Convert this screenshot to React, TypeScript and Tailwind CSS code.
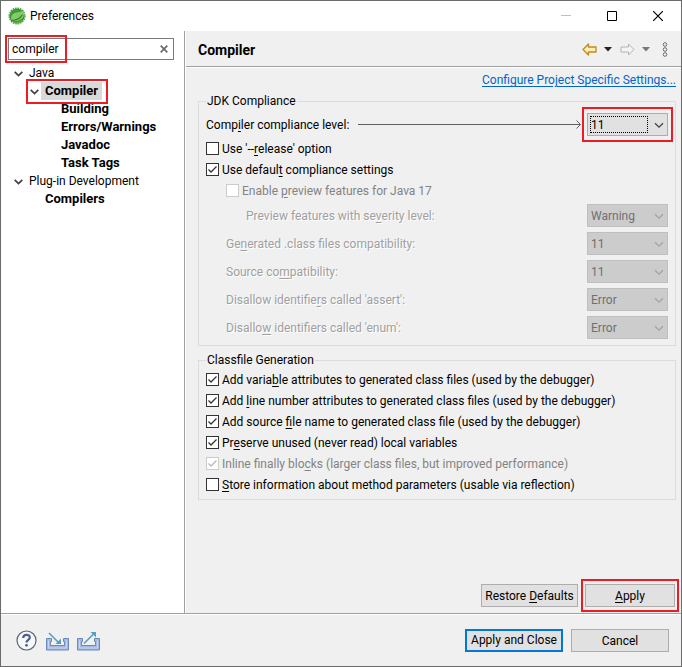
import type { ReactNode } from "react";

function Key({ children }: { children: ReactNode }) {
  return <span className="underline underline-offset-2">{children}</span>;
}

function Chevron({ className }: { className?: string }) {
  return (
    <svg className={className} width="10" height="7" viewBox="0 0 10 7" fill="none">
      <path d="M1 1.2 5 5.2 9 1.2" stroke="currentColor" strokeWidth="1.3" />
    </svg>
  );
}

function TreeArrow() {
  return (
    <svg className="mt-0.5 shrink-0" width="9" height="6" viewBox="0 0 9 6" fill="none">
      <path d="M.7.8 4.5 4.6 8.3.8" stroke="#404040" strokeWidth="1.7" />
    </svg>
  );
}

function Checkbox({
  id,
  checked = false,
  disabled = false,
  children,
}: {
  id: string;
  checked?: boolean;
  disabled?: boolean;
  children: ReactNode;
}) {
  return (
    <div className="flex h-[21px] items-center gap-[3px]">
      <span className="relative h-[13px] w-[13px] shrink-0">
        <input
          id={id}
          type="checkbox"
          defaultChecked={checked}
          disabled={disabled}
          className="peer block h-[13px] w-[13px] appearance-none border border-[#333333] bg-white disabled:border-[#cccccc]"
        />
        <svg
          className="pointer-events-none absolute inset-0 hidden text-[#333333] peer-checked:block peer-disabled:text-[#b8b8b8]"
          width="13"
          height="13"
          viewBox="0 0 13 13"
          fill="none"
        >
          <path d="M2.5 6.5 5 9 10.5 3.5" stroke="currentColor" strokeWidth="1.3" />
        </svg>
      </span>
      <label htmlFor={id} className={disabled ? "text-[#838383]" : "text-black"}>
        {children}
      </label>
    </div>
  );
}

function Combo({ id, value, disabled = false }: { id: string; value: string; disabled?: boolean }) {
  return (
    <span className="relative block h-[23px] w-[81px] shrink-0">
      <select
        id={id}
        defaultValue={value}
        disabled={disabled}
        className="block h-full w-full appearance-none border border-[#adadad] bg-[#e1e1e1] px-[3px] text-black outline-none disabled:border-[#bfbfbf] disabled:bg-[#cccccc] disabled:text-[#707070] disabled:opacity-100"
      >
        <option>{value}</option>
      </select>
      <Chevron
        className={
          disabled
            ? "pointer-events-none absolute top-[9px] right-1 text-[#a3a3a3]"
            : "pointer-events-none absolute top-[9px] right-1 text-[#404040]"
        }
      />
      {!disabled && (
        <span className="pointer-events-none absolute inset-y-[3px] right-[20px] left-[3px] border border-dotted border-black" />
      )}
    </span>
  );
}

function DisabledRow({
  id,
  value,
  nested = false,
  children,
}: {
  id: string;
  value: string;
  nested?: boolean;
  children: ReactNode;
}) {
  return (
    <div className={nested ? "flex items-center justify-between pl-10" : "flex items-center justify-between pl-5"}>
      <label htmlFor={id} className="text-[#a0a0a0] [text-shadow:1px_1px_0_#fff]">
        {children}
      </label>
      <Combo id={id} value={value} disabled />
    </div>
  );
}

function Highlight({ className }: { className: string }) {
  return <span className={`pointer-events-none absolute border-2 border-[#ed1c24] ${className}`} />;
}

function SpringLogo() {
  return (
    <svg width="18" height="18" viewBox="0 0 18 18">
      <circle cx="9" cy="9" r="7.6" fill="#3f9a35" />
      <circle cx="9" cy="9" r="7.9" fill="none" stroke="#3f9a35" strokeWidth="1.2" strokeDasharray="1.6 .9" />
      <path
        d="M15.8 3C13.5 5.6 9.5 4.6 6.2 6.2 2.8 7.9 2.5 11.4 4 13.2c3.3 1.4 8.800.8 10.900-2.700C16.300 8 16.200 5.400 15.800 3Z"
        fill="#86c96a"
      />
      <path d="M3.4 13.500c4.600.1 8.600-1.900 11-5.700" fill="none" stroke="#2a7a2c" strokeWidth="1.200" />
      <path d="M3.600 14c2.800 2.300 8 2.200 10.600-.6" fill="none" stroke="#5fb04c" strokeWidth="1.400" />
    </svg>
  );
}

function NavArrow({ forward = false }: { forward?: boolean }) {
  return (
    <svg width="15" height="13" viewBox="0 0 15 13">
      {forward ? (
        <path d="M14 6.5 8.5 1v3H1v5h7.5v3Z" fill="#f4f4f4" stroke="#b4b4b4" strokeLinejoin="round" />
      ) : (
        <path d="M1 6.5 6.5 1v3H14v5H6.5v3Z" fill="#fdeeb5" stroke="#c08a1e" strokeWidth="1.3" strokeLinejoin="round" />
      )}
    </svg>
  );
}

function Triangle({ className }: { className: string }) {
  return (
    <svg className={className} width="8" height="5" viewBox="0 0 8 5">
      <path d="M0 0h8L4 4.5Z" fill="currentColor" />
    </svg>
  );
}

function TrayIcon({ out = false }: { out?: boolean }) {
  return (
    <svg width="23" height="20" viewBox="0 0 23 20" fill="none">
      <path d="M.5 7.5h5v3h-1v4h14v-4h-1v-3h5V19H.5Z" fill="#a3b8de" stroke="#6b88bf" />
      <path d="M2.500 9.500v7.500h18V9.500" stroke="#c9d7ee" />
      {out ? (
        <>
          <path d="M7 12.500 17 2.500" stroke="#559fc6" strokeWidth="1.600" />
          <path d="M13.500 1H19v5.500Z" fill="#559fc6" />
        </>
      ) : (
        <>
          <path d="M3 2 13 12" stroke="#559fc6" strokeWidth="1.600" />
          <path d="M9.500 13H15V7.500Z" fill="#559fc6" />
        </>
      )}
    </svg>
  );
}

function TitleBar() {
  return (
    <header className="flex h-[30px] items-center bg-white pl-[7px]">
      <SpringLogo />
      <h1 className="ml-1">Preferences</h1>
      <div className="ml-auto flex">
        <button aria-label="Minimize" className="flex h-[30px] w-[46px] items-center justify-center text-[#c0c0c0]">
          <svg width="10" height="10" viewBox="0 0 10 10">
            <path d="M0 4.5h10" stroke="currentColor" />
          </svg>
        </button>
        <button aria-label="Maximize" className="flex h-[30px] w-[46px] items-center justify-center">
          <svg width="10" height="10" viewBox="0 0 10 10">
            <path d="M.5.5h9v9h-9Z" fill="none" stroke="#000" />
          </svg>
        </button>
        <button aria-label="Close" className="flex h-[30px] w-[46px] items-center justify-center">
          <svg width="10" height="10" viewBox="0 0 10 10">
            <path d="m0 0 10 10M10 0 0 10" stroke="#000" strokeWidth="1.2" />
          </svg>
        </button>
      </div>
    </header>
  );
}

function Sidebar() {
  return (
    <aside className="w-[184px] shrink-0 border-r border-[#a0a0a0] bg-white pt-[7px] pl-[7px]">
      <div className="relative mr-[10px]">
        <input
          type="text"
          aria-label="Filter"
          defaultValue="compiler"
          className="block h-[22px] w-full border border-[#7a7a7a] bg-white px-[3px] outline-none"
        />
        <button aria-label="Clear" className="absolute top-[7px] right-[6px]">
          <svg width="8" height="8" viewBox="0 0 8 8">
            <path d="m.7.7 6.6 6.6M7.3.7.7 7.3" stroke="#6b6b6b" strokeWidth="1.7" />
          </svg>
        </button>
        <Highlight className="-top-[3px] -left-[3px] h-[28px] w-[62px]" />
      </div>
      <ul className="mt-1 leading-[18px]">
        <li>
          <div className="flex h-[18px] items-center gap-[6px] pl-[6px]">
            <TreeArrow />
            Java
          </div>
          <ul className="text-[13px] leading-[18px] font-bold">
            <li className="relative flex h-[18px] items-center gap-[2px] pl-[22px]">
              <TreeArrow />
              <span className="bg-[#d9d9d9] px-1">Compiler</span>
              <Highlight className="-top-[3px] left-[18px] z-10 h-[25px] w-[82px]" />
            </li>
            <li className="pl-[53px]">Building</li>
            <li className="pl-[53px]">Errors/Warnings</li>
            <li className="pl-[53px]">Javadoc</li>
            <li className="pl-[53px]">Task Tags</li>
          </ul>
        </li>
        <li>
          <div className="flex h-[18px] items-center gap-[6px] pl-[6px]">
            <TreeArrow />
            Plug-in Development
          </div>
          <ul className="text-[13px] leading-[18px] font-bold">
            <li className="pl-[37px]">Compilers</li>
          </ul>
        </li>
      </ul>
    </aside>
  );
}

function PageHeader() {
  return (
    <div className="flex h-9 items-center border-b border-[#a0a0a0] pt-[2px] pr-[13px] pl-3">
      <h2 className="text-[14px] font-bold">Compiler</h2>
      <div className="ml-auto flex items-center">
        <button aria-label="Back">
          <NavArrow />
        </button>
        <button aria-label="Back history" className="ml-[7px]">
          <Triangle className="text-[#222222]" />
        </button>
        <button aria-label="Forward" className="ml-[8px]">
          <NavArrow forward />
        </button>
        <button aria-label="Forward history" className="ml-[7px]">
          <Triangle className="text-[#777777]" />
        </button>
        <button aria-label="View menu" className="ml-[12px]">
          <svg width="6" height="15" viewBox="0 0 6 15" fill="none" stroke="#6b6b6b">
            <circle cx="3" cy="2.5" r="1.8" />
            <circle cx="3" cy="7.5" r="1.8" />
            <circle cx="3" cy="12.5" r="1.8" />
          </svg>
        </button>
      </div>
    </div>
  );
}

export default function App() {
  return (
    <div className="flex min-h-screen flex-col border border-[#6b6b6b] bg-[#f0f0f0] font-['Roboto','Noto_Sans',sans-serif] text-[12px] leading-[18px] text-black">
      <TitleBar />
      <div className="flex flex-1 border-b border-[#a0a0a0]">
        <Sidebar />
        <main className="flex min-w-0 flex-1 flex-col border-l border-white">
          <PageHeader />
          <div className="flex flex-1 flex-col border-t border-white pr-[5px] pl-3">
            <div className="flex h-6 items-center justify-end">
              <a href="#project-settings" className="text-[#0066cc] underline underline-offset-2">
                Configure Project Specific Settings...
              </a>
            </div>

            <fieldset className="border border-[#dcdcdc] px-[7px] pt-[3px] pb-[6px]">
              <legend className="px-px">JDK Compliance</legend>
              <div className="flex h-[23px] items-center">
                <label htmlFor="level">
                  Comp<Key>i</Key>ler compliance level:
                </label>
                <span className="ml-[9px] h-px flex-1 bg-[#606060]" />
                <svg className="mr-[6px] -ml-1" width="5" height="9" viewBox="0 0 5 9" fill="none">
                  <path d="m.5.5 4 4-4 4" stroke="#606060" />
                </svg>
                <span className="relative">
                  <Combo id="level" value="11" />
                  <Highlight className="-inset-x-[5px] -inset-y-[6px]" />
                </span>
              </div>
              <div className="mt-[2px]">
                <Checkbox id="release">
                  Use &apos;--<Key>r</Key>elease&apos; option
                </Checkbox>
                <Checkbox id="defaults" checked>
                  Use defaul<Key>t</Key> compliance settings
                </Checkbox>
                <div className="pl-5">
                  <Checkbox id="preview" disabled>
                    Enable <Key>p</Key>review features for Java 17
                  </Checkbox>
                </div>
              </div>
              <div className="mt-[3px] flex flex-col gap-[5px]">
                <DisabledRow id="severity" value="Warning" nested>
                  Preview features with se<Key>v</Key>erity level:
                </DisabledRow>
                <DisabledRow id="classfiles" value="11">
                  Ge<Key>n</Key>erated .class files compatibility:
                </DisabledRow>
                <DisabledRow id="source" value="11">
                  Source co<Key>m</Key>patibility:
                </DisabledRow>
                <DisabledRow id="assert" value="Error">
                  Disallow identifie<Key>r</Key>s called &apos;assert&apos;:
                </DisabledRow>
                <DisabledRow id="enum" value="Error">
                  Disallo<Key>w</Key> identifiers called &apos;enum&apos;:
                </DisabledRow>
              </div>
            </fieldset>

            <fieldset className="mt-[5px] border border-[#dcdcdc] px-[7px] pb-1">
              <legend className="px-px">Classfile Generation</legend>
              <Checkbox id="variables" checked>
                Add varia<Key>b</Key>le attributes to generated class files (used by the debugger)
              </Checkbox>
              <Checkbox id="lines" checked>
                Add <Key>l</Key>ine number attributes to generated class files (used by the debugger)
              </Checkbox>
              <Checkbox id="sourcename" checked>
                Add source <Key>f</Key>ile name to generated class file (used by the debugger)
              </Checkbox>
              <Checkbox id="unused" checked>
                Pr<Key>e</Key>serve unused (never read) local variables
              </Checkbox>
              <Checkbox id="inline" checked disabled>
                Inline finally blo<Key>c</Key>ks (larger class files, but improved performance)
              </Checkbox>
              <Checkbox id="params">
                <Key>S</Key>tore information about method parameters (usable via reflection)
              </Checkbox>
            </fieldset>

            <div className="mt-auto flex justify-end gap-[7px] pr-px pb-[6px]">
              <button className="h-[23px] w-[97px] border border-[#adadad] bg-[#e1e1e1]">
                Restore <Key>D</Key>efaults
              </button>
              <button className="relative h-[23px] w-[90px] border border-[#adadad] bg-[#e1e1e1]">
                <Key>A</Key>pply
                <Highlight className="-inset-x-[5px] -inset-y-[6px]" />
              </button>
            </div>
          </div>
        </main>
      </div>
      <footer className="flex h-[52px] items-center gap-2 border-t border-white pr-3 pl-[15px]">
        <button aria-label="Help">
          <svg width="21" height="21" viewBox="0 0 21 21">
            <circle cx="10.5" cy="10.5" r="9.5" fill="#f6f8fb" stroke="#5b6577" strokeWidth="1.2" />
            <path d="M7.2 8c0-4.200 6.600-4.200 6.600-.4 0 2.400-3.300 2.400-3.300 5" fill="none" stroke="#4c6188" strokeWidth="2.200" />
            <circle cx="10.5" cy="15.300" r="1.400" fill="#4c6188" />
          </svg>
        </button>
        <button aria-label="Import" className="ml-px">
          <TrayIcon />
        </button>
        <button aria-label="Export">
          <TrayIcon out />
        </button>
        <button className="ml-auto h-[23px] w-[98px] border-2 border-[#0078d7] bg-[#e1e1e1] leading-[19px]">
          Apply and Close
        </button>
        <button className="h-[23px] w-[98px] border border-[#adadad] bg-[#e1e1e1]">Cancel</button>
      </footer>
    </div>
  );
}
